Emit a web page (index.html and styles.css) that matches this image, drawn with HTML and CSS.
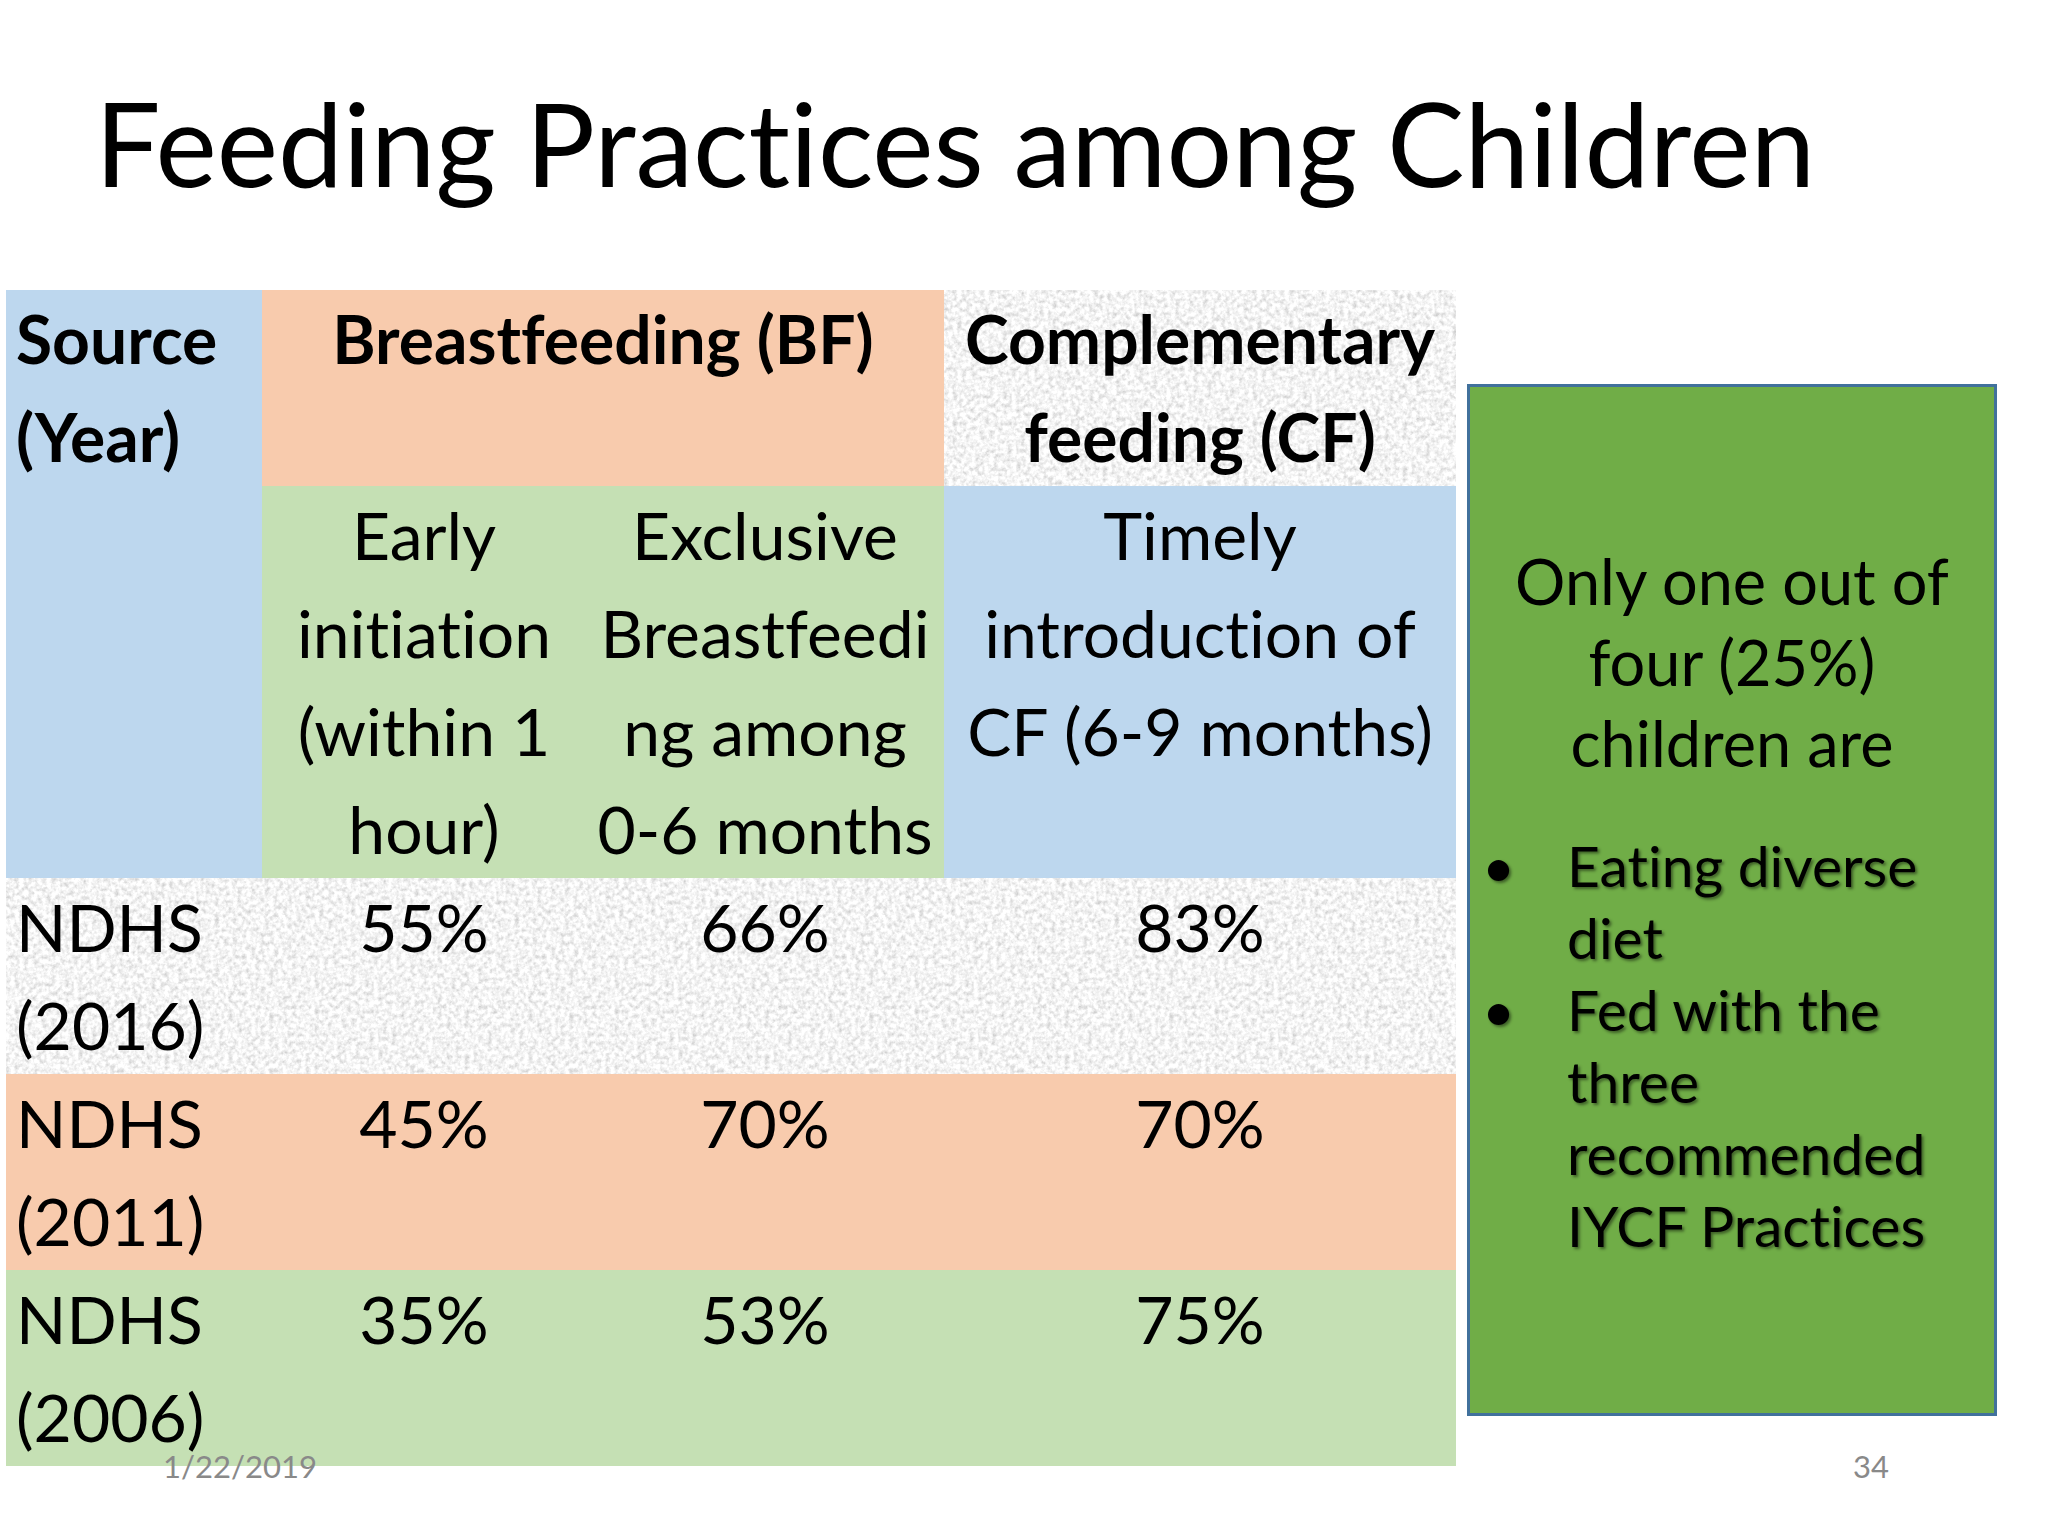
FILE: index.html
```html
<!DOCTYPE html>
<html lang="en">
<head>
<meta charset="utf-8">
<title>Feeding Practices among Children</title>
<link rel="stylesheet" href="styles.css">
</head>
<body>
<div class="slide">
  <h1 class="title">Feeding Practices among Children</h1>
  <div class="content">
    <table class="grid">
      <colgroup>
        <col class="c-src"><col class="c-early"><col class="c-excl"><col class="c-cf">
      </colgroup>
      <tr>
        <th rowspan="2" class="src blue">Source<br>(Year)</th>
        <th colspan="2" class="peach">Breastfeeding (BF)</th>
        <th class="tex">Complementary<br>feeding (CF)</th>
      </tr>
      <tr>
        <td class="green">Early<br>initiation<br>(within 1<br>hour)</td>
        <td class="green">Exclusive<br>Breastfeedi<br>ng among<br>0-6 months</td>
        <td class="blue">Timely<br>introduction of<br>CF (6-9 months)</td>
      </tr>
      <tr class="tex">
        <td class="src">NDHS<br>(2016)</td><td>55%</td><td>66%</td><td>83%</td>
      </tr>
      <tr class="peach">
        <td class="src">NDHS<br>(2011)</td><td>45%</td><td>70%</td><td>70%</td>
      </tr>
      <tr class="green">
        <td class="src">NDHS<br>(2006)</td><td>35%</td><td>53%</td><td>75%</td>
      </tr>
    </table>
    <div class="callout">
      <p class="lead">Only one out of<br>four (25%)<br>children are</p>
      <ul class="points">
        <li><span class="dot">•</span><span class="txt">Eating diverse<br>diet</span></li>
        <li><span class="dot">•</span><span class="txt">Fed with the<br>three<br>recommended<br>IYCF Practices</span></li>
      </ul>
    </div>
  </div>
  <div class="foot-date">1/22/2019</div>
  <div class="foot-num">34</div>
</div>
</body>
</html>
```

FILE: styles.css
```css
html, body {
  margin: 0;
  padding: 0;
  background: #ffffff;
}

.slide {
  position: relative;
  width: 2048px;
  height: 1536px;
  overflow: hidden;
  font-family: "Lato", "Open Sans", sans-serif;
  font-variant-ligatures: none;
  color: #000000;
}

.title {
  margin: 0;
  padding: 73px 0 0 95px;
  font-size: 116px;
  font-weight: 400;
  line-height: 140px;
  white-space: nowrap;
}

.content {
  display: flex;
  align-items: flex-start;
  margin-top: 77px;
  padding-left: 6px;
}

.grid {
  border-collapse: collapse;
  border-spacing: 0;
  table-layout: fixed;
  width: 1450px;
  font-size: 66px;
  line-height: 98px;
}

.c-src { width: 256px; }
.c-early { width: 324px; }
.c-excl { width: 358px; }
.c-cf { width: 512px; }

.grid th,
.grid td {
  padding: 0 8px;
  vertical-align: top;
  text-align: center;
  white-space: nowrap;
}

.grid th {
  font-weight: 700;
}

.grid .src {
  text-align: left;
  padding-left: 10px;
}

.blue { background-color: #bdd7ee; }
.peach { background-color: #f8cbad; }
.green { background-color: #c5e0b4; }

.tex {
  background-color: #e6e6e6;
  background-image: url("data:image/svg+xml,%3Csvg xmlns='http://www.w3.org/2000/svg' width='300' height='300'%3E%3Cfilter id='n' x='0' y='0' width='100%25' height='100%25'%3E%3CfeTurbulence type='fractalNoise' baseFrequency='0.22' numOctaves='3' seed='4' stitchTiles='stitch'/%3E%3CfeColorMatrix values='0.75 0 0 0 0.53 0.75 0 0 0 0.53 0.75 0 0 0 0.53 0 0 0 0 1'/%3E%3C/filter%3E%3Crect width='300' height='300' filter='url(%23n)'/%3E%3C/svg%3E");
}

.callout {
  box-sizing: border-box;
  width: 530px;
  height: 1032px;
  margin-top: 94px;
  margin-left: 11px;
  border: 3px solid #41719c;
  background-color: #70ad47;
  display: flex;
  flex-direction: column;
  justify-content: center;
}

.lead {
  margin: 0;
  text-align: center;
  font-size: 63px;
  line-height: 81px;
  white-space: nowrap;
}

.points {
  list-style: none;
  margin: 46px 0 0 0;
  padding: 0;
  font-size: 57px;
  line-height: 72px;
  text-shadow: 2px 2px 3px rgba(0, 0, 0, 0.45);
}

.points li {
  display: flex;
}

.dot {
  flex: 0 0 97px;
  box-sizing: border-box;
  padding-left: 12px;
}

.txt {
  white-space: nowrap;
}

.foot-date,
.foot-num {
  position: absolute;
  top: 1446px;
  font-size: 31px;
  line-height: 40px;
  color: #898989;
}

.foot-date {
  left: 163px;
}

.foot-num {
  left: 1853px;
}
```
